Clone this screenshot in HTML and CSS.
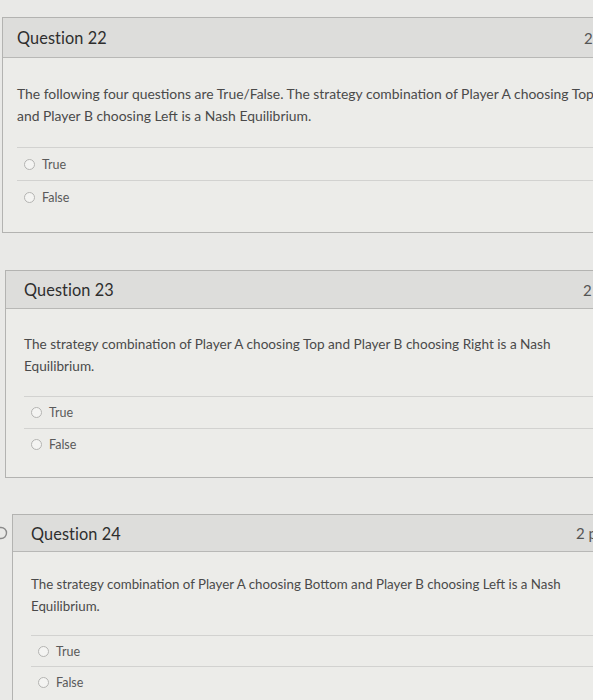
FILE: index.html
```html
<!DOCTYPE html>
<html lang="en">
<head>
<meta charset="utf-8">
<title>Quiz</title>
<link rel="stylesheet" href="styles.css">
</head>
<body>
<main class="page">
  <section class="card card--a">
    <header class="card-head">
      <h2 class="card-title">Question 22</h2>
      <span class="points">2 points</span>
    </header>
    <div class="card-body">
      <p class="prompt prompt--wide">The following four questions are True/False. The strategy combination of Player A choosing Top and Player B choosing Left is a Nash Equilibrium.</p>
      <ul class="options">
        <li class="option"><span class="radio"></span><span class="label">True</span></li>
        <li class="option"><span class="radio"></span><span class="label">False</span></li>
      </ul>
    </div>
  </section>

  <section class="card card--b">
    <header class="card-head">
      <h2 class="card-title">Question 23</h2>
      <span class="points">2 points</span>
    </header>
    <div class="card-body">
      <p class="prompt">The strategy combination of Player A choosing Top and Player B choosing Right is a Nash Equilibrium.</p>
      <ul class="options">
        <li class="option"><span class="radio"></span><span class="label">True</span></li>
        <li class="option"><span class="radio"></span><span class="label">False</span></li>
      </ul>
    </div>
  </section>

  <section class="card card--c">
    <header class="card-head">
      <svg class="nav-arrow" width="14" height="14" viewBox="0 0 14 14" aria-hidden="true"><circle cx="7" cy="7" r="5.5" fill="none" stroke="#8a8a8a" stroke-width="1.4"/></svg>
      <h2 class="card-title">Question 24</h2>
      <span class="points">2 points</span>
    </header>
    <div class="card-body">
      <p class="prompt prompt--narrow">The strategy combination of Player A choosing Bottom and Player B choosing Left is a Nash Equilibrium.</p>
      <ul class="options">
        <li class="option"><span class="radio"></span><span class="label">True</span></li>
        <li class="option"><span class="radio"></span><span class="label">False</span></li>
      </ul>
    </div>
  </section>
</main>
</body>
</html>
```

FILE: styles.css
```css
html, body {
  margin: 0;
  padding: 0;
}

body {
  background: #e9e9e7;
  font-family: Lato, "Open Sans", "Liberation Sans", sans-serif;
  overflow: hidden;
  width: 593px;
  height: 700px;
}

.page {
  padding-top: 17px;
  display: flex;
  flex-direction: column;
}

.card {
  position: relative;
  flex-shrink: 0;
  background: #ecece9;
  border: 1px solid #b3b3b1;
  box-sizing: border-box;
  --pad: 15px;
  --head: 39px;
  --row: 33px;
  --top: 25px;
  --bottom: 17px;
}

.card--a { margin-left: 2px; width: 655px; --pad: 14px; --bottom: 19px; }
.card--b { margin-left: 5px; margin-top: 37px; width: 651px; --pad: 18px; --head: 37px; --row: 32px; --top: 24px; }
.card--c { margin-left: 12px; margin-top: 36px; width: 637px; --pad: 18px; --head: 36px; --row: 31px; --top: 21px; }

.card-head {
  position: relative;
  display: flex;
  align-items: center;
  height: var(--head);
  padding: 0 16px 0 var(--pad);
  background: #dddddb;
  border-bottom: 1px solid #b8b8b6;
}

.card-title {
  margin: 0;
  font-size: 16.3px;
  font-weight: 400;
  color: #2e2e2e;
  letter-spacing: 0.1px;
}

.points {
  margin-left: auto;
  flex-shrink: 0;
  white-space: nowrap;
  font-size: 15px;
  color: #555;
  width: 56px;
}

.nav-arrow {
  position: absolute;
  left: -19px;
  top: 11px;
}

.card-body {
  padding: var(--top) var(--pad) var(--bottom);
}

.prompt {
  margin: 0 0 19px;
  font-size: 13.6px;
  line-height: 22px;
  color: #4a4a4a;
  max-width: 560px;
}

.prompt--wide {
  font-size: 13.9px;
  max-width: 600px;
  margin-bottom: 20px;
}

.prompt--narrow {
  font-size: 13.3px;
  margin-bottom: 18px;
}

.options {
  list-style: none;
  margin: 0;
  padding: 0;
}

.option {
  display: flex;
  align-items: center;
  height: var(--row);
  border-top: 1px solid #d2d2d0;
  padding-left: 7px;
  box-sizing: border-box;
}

.radio {
  width: 11px;
  height: 11px;
  border-radius: 50%;
  border: 1px solid #b4b4b2;
  background: #f4f4f2;
  box-sizing: border-box;
  margin-right: 7px;
}

.label {
  font-size: 12.5px;
  color: #5a5a5a;
}
```
